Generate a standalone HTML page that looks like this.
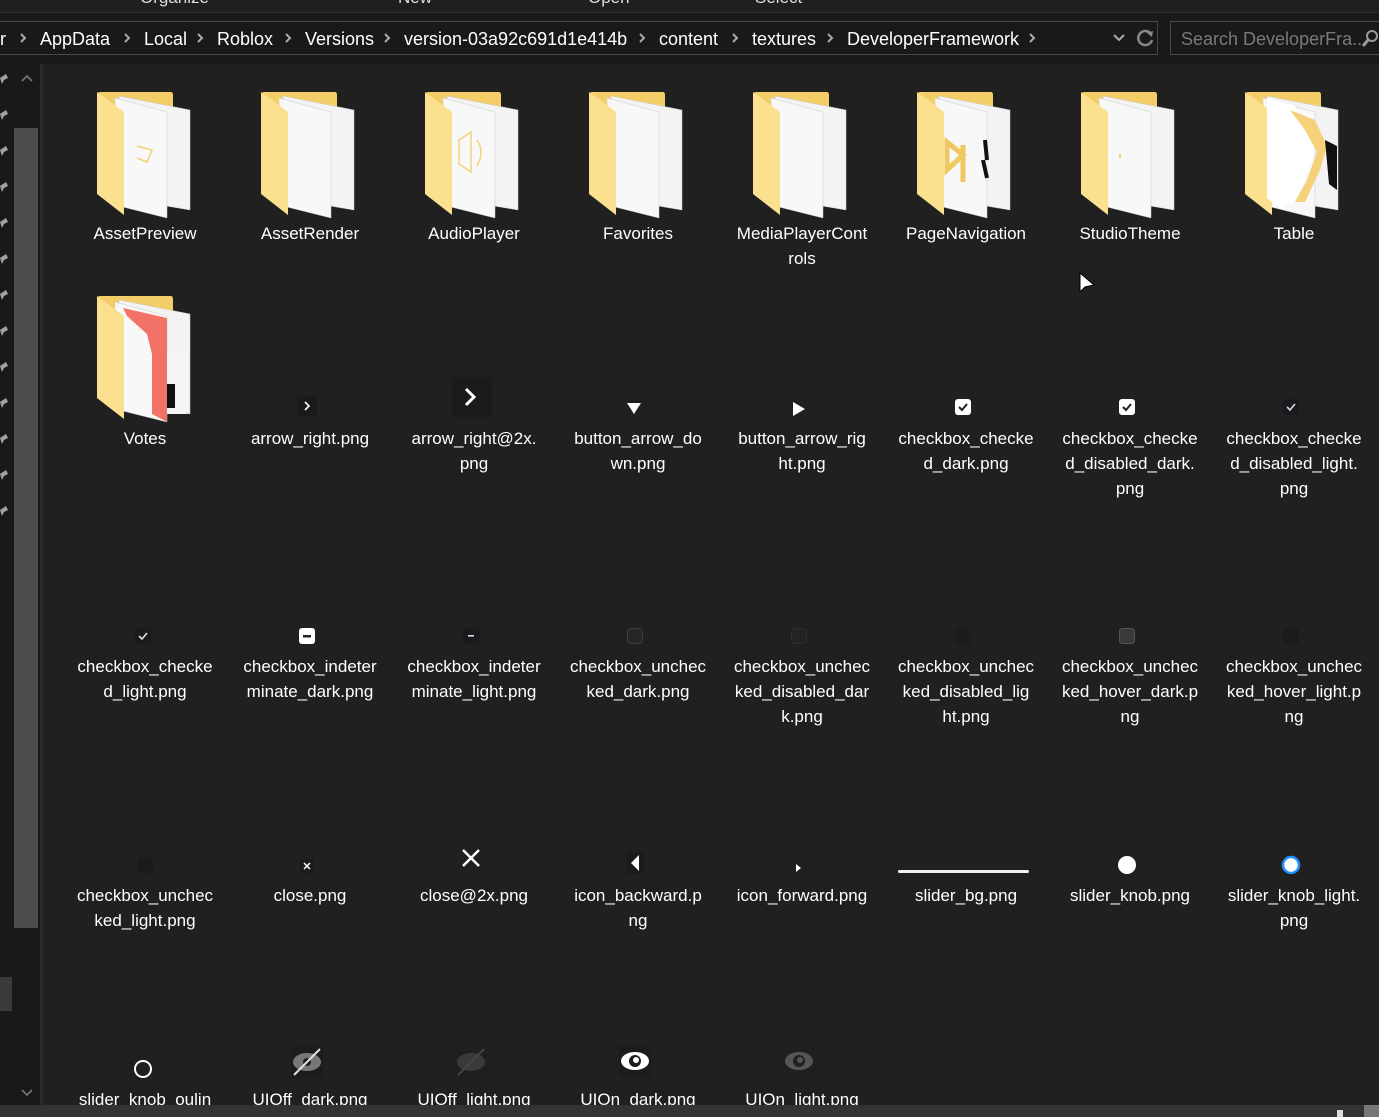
<!DOCTYPE html>
<html><head><meta charset="utf-8"><style>
*{margin:0;padding:0;box-sizing:border-box}
body{width:1379px;height:1117px;background:#202020;position:relative;overflow:hidden;font-family:"Liberation Sans",sans-serif;color:#fff}
.a{position:absolute}
.lbl{position:absolute;width:156px;text-align:center;font-size:17px;line-height:25px;color:#fff}
.crumb{position:absolute;top:29px;font-size:18px;color:#fff;white-space:nowrap}
.sep{position:absolute;top:33px}
.fold{position:absolute;width:96px;height:130px}
</style></head><body>
<div class="a" style="left:0;top:0;width:1379px;height:13px;background:#1f1f1f;border-bottom:1px solid #2c2c2c"></div>
<div class="a" style="left:140px;top:-12px;font-size:17px;color:#ddd">Organize</div>
<div class="a" style="left:398px;top:-12px;font-size:17px;color:#ddd">New</div>
<div class="a" style="left:588px;top:-12px;font-size:17px;color:#ddd">Open</div>
<div class="a" style="left:755px;top:-12px;font-size:17px;color:#ddd">Select</div>
<div class="a" style="left:0;top:13px;width:1379px;height:51px;background:#191919"></div>
<div class="a" style="left:-2px;top:21px;width:1160px;height:34px;border:1px solid #4a4a4a;background:#191919"></div>
<div class="a" style="left:1170px;top:21px;width:215px;height:34px;border:1px solid #4a4a4a;background:#191919"></div>
<div class="a" style="left:1181px;top:29px;font-size:18px;color:#7a7a7a">Search DeveloperFra...</div>
<svg class="a" style="left:1361px;top:29px" width="18" height="20"><circle cx="11" cy="7" r="5" fill="none" stroke="#999" stroke-width="2"/><path d="M7 11 L2 17" stroke="#999" stroke-width="3"/></svg>
<svg class="a" style="left:1112px;top:32px" width="16" height="12"><path d="M2 3 L7 8 L12 3" fill="none" stroke="#aaa" stroke-width="2"/></svg>
<svg class="a" style="left:1136px;top:28px" width="20" height="20"><path d="M15 6 A7 7 0 1 0 16 12" fill="none" stroke="#888" stroke-width="2.5"/><path d="M11 5 L17 3 L16 9 Z" fill="#888"/></svg>
<svg width="0" height="0" style="position:absolute"><defs>
<path id="ch" d="M1 1 L5 5 L1 9" fill="none" stroke="#aaa" stroke-width="2"/>
<g id="f"><path d="M1 4 Q1 2 3 2 L74 2 Q76 2 76 5 L76 24 L1 24 Z" fill="#f2cd68"/>
<polygon points="22,6 93,20 93,120 22,108" fill="#f3f3f3" stroke="#ccc" stroke-width=".5"/>
<polygon points="18,8 70,22 70,128 18,115" fill="#f8f8f8" stroke="#ccc" stroke-width=".5"/>
<polygon points="0,2 27,22 27,125 0,104" fill="#fbe08f"/></g>
</defs></svg>
<div class="crumb" style="left:0">r</div><svg class="sep" style="left:20px" width="8" height="10"><use href="#ch"/></svg>
<div class="crumb" style="left:40px">AppData</div><svg class="sep" style="left:124px" width="8" height="10"><use href="#ch"/></svg>
<div class="crumb" style="left:144px">Local</div><svg class="sep" style="left:197px" width="8" height="10"><use href="#ch"/></svg>
<div class="crumb" style="left:217px">Roblox</div><svg class="sep" style="left:285px" width="8" height="10"><use href="#ch"/></svg>
<div class="crumb" style="left:305px">Versions</div><svg class="sep" style="left:384px" width="8" height="10"><use href="#ch"/></svg>
<div class="crumb" style="left:404px">version-03a92c691d1e414b</div><svg class="sep" style="left:639px" width="8" height="10"><use href="#ch"/></svg>
<div class="crumb" style="left:659px">content</div><svg class="sep" style="left:732px" width="8" height="10"><use href="#ch"/></svg>
<div class="crumb" style="left:752px">textures</div><svg class="sep" style="left:827px" width="8" height="10"><use href="#ch"/></svg>
<div class="crumb" style="left:847px">DeveloperFramework</div><svg class="sep" style="left:1029px" width="8" height="10"><use href="#ch"/></svg>
<!-- left pane -->
<div class="a" style="left:0;top:64px;width:40px;height:1041px;background:#191919"></div>
<div class="a" style="left:40px;top:64px;width:3px;height:1041px;background:#2b2b2b"></div>
<div class="a" style="left:14px;top:128px;width:24px;height:800px;background:#4d4d4d"></div>
<div class="a" style="left:0;top:977px;width:12px;height:34px;background:#3a3a3a"></div>
<svg class="a" style="left:20px;top:74px" width="14" height="10"><path d="M2 7 L7 2 L12 7" fill="none" stroke="#777" stroke-width="1.6"/></svg>
<svg class="a" style="left:20px;top:1088px" width="14" height="10"><path d="M2 2 L7 7 L12 2" fill="none" stroke="#777" stroke-width="1.6"/></svg>
<svg class="a" style="left:0;top:70px" width="10" height="460"><g fill="#9aa3a8">
<path d="M0 8 L6 4 L8 8 L4 10 L2 14 Z"/><path d="M0 44 L6 40 L8 44 L4 46 L2 50 Z"/><path d="M0 80 L6 76 L8 80 L4 82 L2 86 Z"/><path d="M0 116 L6 112 L8 116 L4 118 L2 122 Z"/><path d="M0 152 L6 148 L8 152 L4 154 L2 158 Z"/><path d="M0 188 L6 184 L8 188 L4 190 L2 194 Z"/><path d="M0 224 L6 220 L8 224 L4 226 L2 230 Z"/><path d="M0 260 L6 256 L8 260 L4 262 L2 266 Z"/><path d="M0 296 L6 292 L8 296 L4 298 L2 302 Z"/><path d="M0 332 L6 328 L8 332 L4 334 L2 338 Z"/><path d="M0 368 L6 364 L8 368 L4 370 L2 374 Z"/><path d="M0 404 L6 400 L8 404 L4 406 L2 410 Z"/><path d="M0 440 L6 436 L8 440 L4 442 L2 446 Z"/></g></svg>
<svg class="fold" style="left:97px;top:90px"><use href="#f"/><path d="M40 56 L55 60 L50 72 L40 68" fill="none" stroke="#f2d27a" stroke-width="1.5"/></svg>
<svg class="fold" style="left:261px;top:90px"><use href="#f"/></svg>
<svg class="fold" style="left:425px;top:90px"><use href="#f"/><path d="M34 50 L46 42 L46 82 L34 74 Z M52 50 Q60 62 52 76" fill="none" stroke="#f2d27a" stroke-width="1.5"/></svg>
<svg class="fold" style="left:589px;top:90px"><use href="#f"/></svg>
<svg class="fold" style="left:753px;top:90px"><use href="#f"/></svg>
<svg class="fold" style="left:917px;top:90px"><use href="#f"/><path d="M30 52 L46 65 L30 80 Z M46 55 L46 92" fill="none" stroke="#efc860" stroke-width="5"/><path d="M68 50 L70 70 M66 70 L70 88" stroke="#111" stroke-width="4"/></svg>
<svg class="fold" style="left:1081px;top:90px"><use href="#f"/><rect x="38" y="64" width="2" height="4" fill="#f2cd68"/></svg>
<svg class="fold" style="left:1245px;top:90px"><use href="#f"/><path d="M22 8 L50 16 L60 40 L70 60 L60 90 L50 110 L35 118 L22 108 Z" fill="#fff"/><path d="M45 20 L60 40 L72 62 L62 90 L50 112 L60 112 L75 80 L82 56 L70 30 Z" fill="#f5d27a"/><path d="M80 50 L92 56 L92 100 L84 94 Z" fill="#111"/></svg>
<svg class="fold" style="left:97px;top:294px"><use href="#f"/><polygon points="26,14 70,24 70,128 55,120 55,60 50,40 30,22" fill="#f26a60" opacity=".95"/><rect x="70" y="60" width="20" height="60" fill="#f5f5f5"/><rect x="70" y="90" width="8" height="24" fill="#111"/></svg>
<div class="lbl" style="left:67px;top:221px">AssetPreview</div>
<div class="lbl" style="left:232px;top:221px">AssetRender</div>
<div class="lbl" style="left:396px;top:221px">AudioPlayer</div>
<div class="lbl" style="left:560px;top:221px">Favorites</div>
<div class="lbl" style="left:724px;top:221px">MediaPlayerCont<br>rols</div>
<div class="lbl" style="left:888px;top:221px">PageNavigation</div>
<div class="lbl" style="left:1052px;top:221px">StudioTheme</div>
<div class="lbl" style="left:1216px;top:221px">Table</div>
<svg class="a" style="left:1078px;top:272px" width="20" height="24"><path d="M2 1 L2 20 L7 15 L16 13 Z" fill="#fff" stroke="#000" stroke-width="1"/></svg>
<svg class="a" style="left:297px;top:396px" width="20" height="20"><rect width="20" height="20" fill="#1a1a1a"/><path d="M8 6 L12 10 L8 14" fill="none" stroke="#fff" stroke-width="1.6"/></svg>
<svg class="a" style="left:452px;top:377px" width="40" height="40"><rect width="40" height="40" fill="#1b1b1b"/><path d="M14 12 L22 20 L14 28" fill="none" stroke="#fff" stroke-width="3"/></svg>
<svg class="a" style="left:626px;top:402px" width="16" height="12"><path d="M1 1 L15 1 L8 12 Z" fill="#fff"/></svg>
<svg class="a" style="left:792px;top:401px" width="14" height="16"><path d="M1 1 L13 8 L1 15 Z" fill="#fff"/></svg>
<svg class="a" style="left:955px;top:399px" width="17" height="17"><rect width="16" height="16" rx="3" fill="#fff"/><path d="M4 8 L7 11 L12 5" fill="none" stroke="#222" stroke-width="2"/></svg>
<svg class="a" style="left:1119px;top:399px" width="17" height="17"><rect width="16" height="16" rx="3" fill="#fff"/><path d="M4 8 L7 11 L12 5" fill="none" stroke="#222" stroke-width="2"/></svg>
<svg class="a" style="left:1283px;top:399px" width="17" height="17"><rect width="16" height="16" rx="3" fill="#1a1a1e"/><path d="M4 8 L7 11 L12 5" fill="none" stroke="#ddd" stroke-width="1.6"/></svg>
<div class="lbl" style="left:67px;top:426px">Votes</div>
<div class="lbl" style="left:232px;top:426px">arrow_right.png</div>
<div class="lbl" style="left:396px;top:426px">arrow_right@2x.<br>png</div>
<div class="lbl" style="left:560px;top:426px">button_arrow_do<br>wn.png</div>
<div class="lbl" style="left:724px;top:426px">button_arrow_rig<br>ht.png</div>
<div class="lbl" style="left:888px;top:426px">checkbox_checke<br>d_dark.png</div>
<div class="lbl" style="left:1052px;top:426px">checkbox_checke<br>d_disabled_dark.<br>png</div>
<div class="lbl" style="left:1216px;top:426px">checkbox_checke<br>d_disabled_light.<br>png</div>
<svg class="a" style="left:135px;top:628px" width="17" height="17"><rect width="16" height="16" rx="3" fill="#1a1a1e"/><path d="M4 8 L7 11 L12 5" fill="none" stroke="#ddd" stroke-width="1.6"/></svg>
<svg class="a" style="left:299px;top:628px" width="17" height="17"><rect width="16" height="16" rx="3" fill="#fff"/><rect x="4" y="7" width="8" height="2.5" fill="#222"/></svg>
<svg class="a" style="left:463px;top:628px" width="17" height="17"><rect width="16" height="16" rx="3" fill="#1a1a1e"/><rect x="5" y="7" width="6" height="1.6" fill="#ddd"/></svg>
<svg class="a" style="left:627px;top:628px" width="17" height="17"><rect x=".5" y=".5" width="15" height="15" rx="3" fill="#262626" stroke="#3e3e3e"/></svg>
<svg class="a" style="left:791px;top:628px" width="17" height="17"><rect x=".5" y=".5" width="15" height="15" rx="3" fill="#232323" stroke="#2e2e2e"/></svg>
<svg class="a" style="left:955px;top:628px" width="17" height="17"><rect width="16" height="16" rx="3" fill="#1c1c1c"/></svg>
<svg class="a" style="left:1119px;top:628px" width="17" height="17"><rect x=".5" y=".5" width="15" height="15" rx="3" fill="#3a3a3a" stroke="#555"/></svg>
<svg class="a" style="left:1283px;top:628px" width="17" height="17"><rect width="16" height="16" rx="3" fill="#1b1b1b"/></svg>
<div class="lbl" style="left:67px;top:654px">checkbox_checke<br>d_light.png</div>
<div class="lbl" style="left:232px;top:654px">checkbox_indeter<br>minate_dark.png</div>
<div class="lbl" style="left:396px;top:654px">checkbox_indeter<br>minate_light.png</div>
<div class="lbl" style="left:560px;top:654px">checkbox_unchec<br>ked_dark.png</div>
<div class="lbl" style="left:724px;top:654px">checkbox_unchec<br>ked_disabled_dar<br>k.png</div>
<div class="lbl" style="left:888px;top:654px">checkbox_unchec<br>ked_disabled_lig<br>ht.png</div>
<div class="lbl" style="left:1052px;top:654px">checkbox_unchec<br>ked_hover_dark.p<br>ng</div>
<div class="lbl" style="left:1216px;top:654px">checkbox_unchec<br>ked_hover_light.p<br>ng</div>
<svg class="a" style="left:137px;top:857px" width="17" height="17"><rect width="16" height="16" rx="2" fill="#1b1b1b"/></svg>
<svg class="a" style="left:300px;top:859px" width="14" height="14"><rect width="14" height="14" fill="#1b1b1b"/><path d="M4 4 L10 10 M10 4 L4 10" stroke="#fff" stroke-width="1.5"/></svg>
<svg class="a" style="left:459px;top:846px" width="24" height="24"><path d="M4 4 L20 20 M20 4 L4 20" stroke="#fff" stroke-width="2.5"/></svg>
<svg class="a" style="left:626px;top:852px" width="18" height="22"><rect width="18" height="22" fill="#1b1b1b"/><path d="M13 3 L5 11 L13 19 Z" fill="#fff"/></svg>
<svg class="a" style="left:793px;top:862px" width="10" height="12"><path d="M3 2 L8 6 L3 10 Z" fill="#fff"/></svg>
<div class="a" style="left:898px;top:870px;width:131px;height:3px;background:#f2f2f2;border-radius:2px"></div>
<svg class="a" style="left:1116px;top:854px" width="22" height="22"><circle cx="11" cy="11" r="9" fill="#fff"/></svg>
<svg class="a" style="left:1280px;top:854px" width="22" height="22"><circle cx="11" cy="11" r="8" fill="#fff" stroke="#1e90ff" stroke-width="2.5"/></svg>
<div class="lbl" style="left:67px;top:883px">checkbox_unchec<br>ked_light.png</div>
<div class="lbl" style="left:232px;top:883px">close.png</div>
<div class="lbl" style="left:396px;top:883px">close@2x.png</div>
<div class="lbl" style="left:560px;top:883px">icon_backward.p<br>ng</div>
<div class="lbl" style="left:724px;top:883px">icon_forward.png</div>
<div class="lbl" style="left:888px;top:883px">slider_bg.png</div>
<div class="lbl" style="left:1052px;top:883px">slider_knob.png</div>
<div class="lbl" style="left:1216px;top:883px">slider_knob_light.<br>png</div>
<svg class="a" style="left:132px;top:1058px" width="22" height="22"><circle cx="11" cy="11" r="8" fill="none" stroke="#fff" stroke-width="2"/></svg>
<svg class="a" style="left:291px;top:1046px" width="32" height="32"><rect width="32" height="32" fill="#1c1c1c"/><ellipse cx="16" cy="16" rx="14" ry="9" fill="#777"/><circle cx="16" cy="16" r="4" fill="#1c1c1c"/><path d="M3 29 L29 3" stroke="#e0e0e0" stroke-width="2"/></svg>
<svg class="a" style="left:455px;top:1046px" width="32" height="32"><rect width="32" height="32" fill="#1f1f1f"/><ellipse cx="16" cy="16" rx="14" ry="9" fill="#3a3a3a"/><path d="M3 29 L29 3" stroke="#444" stroke-width="2"/></svg>
<svg class="a" style="left:619px;top:1045px" width="32" height="32"><rect width="32" height="32" fill="#1c1c1c"/><ellipse cx="16" cy="16" rx="14" ry="9" fill="#fff"/><circle cx="16" cy="16" r="6" fill="#1c1c1c"/><circle cx="17" cy="15" r="3" fill="#fff"/></svg>
<svg class="a" style="left:783px;top:1045px" width="32" height="32"><rect width="32" height="32" fill="#1f1f1f"/><ellipse cx="16" cy="16" rx="14" ry="9" fill="#555"/><circle cx="16" cy="16" r="6" fill="#1f1f1f"/><circle cx="17" cy="15" r="3" fill="#555"/></svg>
<div class="lbl" style="left:67px;top:1087px">slider_knob_oulin</div>
<div class="lbl" style="left:232px;top:1087px">UIOff_dark.png</div>
<div class="lbl" style="left:396px;top:1087px">UIOff_light.png</div>
<div class="lbl" style="left:560px;top:1087px">UIOn_dark.png</div>
<div class="lbl" style="left:724px;top:1087px">UIOn_light.png</div>
<div class="a" style="left:0;top:1105px;width:1379px;height:12px;background:#333"></div>
<div class="a" style="left:1337px;top:1110px;width:6px;height:7px;background:#ddd"></div>
<div class="a" style="left:1364px;top:1105px;width:15px;height:12px;background:#777"></div>
</body></html>
